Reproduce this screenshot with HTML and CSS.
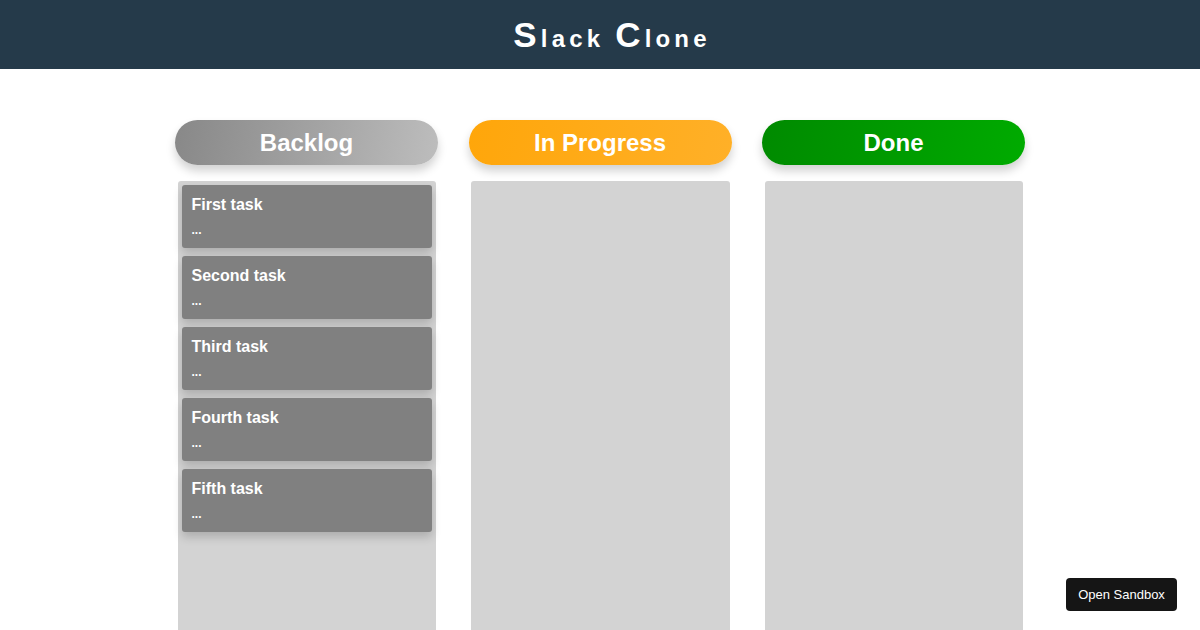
FILE: index.html
```html
<!DOCTYPE html>
<html>
<head>
<meta charset="utf-8">
<link rel="stylesheet" href="styles.css">
</head>
<body>
<header class="topbar">
  <h1 class="title"><span class="big">S</span>lack <span class="big">C</span>lone</h1>
</header>
<main class="board">
  <section class="column">
    <h2 class="col-head backlog">Backlog</h2>
    <div class="col-body">
      <div class="card"><div class="card-title">First task</div><div class="card-desc">...</div></div>
      <div class="card"><div class="card-title">Second task</div><div class="card-desc">...</div></div>
      <div class="card"><div class="card-title">Third task</div><div class="card-desc">...</div></div>
      <div class="card"><div class="card-title">Fourth task</div><div class="card-desc">...</div></div>
      <div class="card"><div class="card-title">Fifth task</div><div class="card-desc">...</div></div>
    </div>
  </section>
  <section class="column">
    <h2 class="col-head progress">In Progress</h2>
    <div class="col-body"></div>
  </section>
  <section class="column">
    <h2 class="col-head done">Done</h2>
    <div class="col-body"></div>
  </section>
</main>
<a class="sandbox-btn">Open Sandbox</a>
</body>
</html>
```
FILE: styles.css
```css
html, body {
  margin: 0;
  padding: 0;
  background: #ffffff;
  font-family: "Liberation Sans", Arial, sans-serif;
  overflow: hidden;
}
.topbar {
  height: 69px;
  background: #253a4a;
  display: flex;
  align-items: center;
  justify-content: center;
}
.title {
  margin: 0;
  color: #ffffff;
  font-size: 24px;
  font-weight: bold;
  letter-spacing: 4.2px;
  line-height: 1;
  padding-left: 24px;
}
.title .big {
  font-size: 35px;
}
.board {
  display: flex;
  justify-content: center;
  gap: 30.5px;
  padding-top: 51px;
}
.column {
  width: 263px;
  display: flex;
  flex-direction: column;
}
.col-head {
  margin: 0;
  height: 45px;
  line-height: 45px;
  border-radius: 23px;
  text-align: center;
  color: #ffffff;
  font-size: 24px;
  font-weight: bold;
  box-shadow: 0 6px 10px rgba(0, 0, 0, 0.18);
}
.backlog {
  background: linear-gradient(100deg, #888888 0%, #a4a4a4 55%, #bdbdbd 100%);
}
.progress {
  background: linear-gradient(100deg, #ffa60a 0%, #ffb028 100%);
}
.done {
  background: linear-gradient(100deg, #008a00 0%, #00ab00 100%);
}
.col-body {
  margin: 16px 2px 0 2.5px;
  height: 470px;
  background: #d3d3d3;
  border-radius: 3px;
  padding: 4px;
  display: flex;
  flex-direction: column;
  gap: 8px;
}
.card {
  background: #808080;
  border-radius: 3px;
  padding: 10px;
  color: #ffffff;
  box-shadow: 0 5px 10px rgba(0, 0, 0, 0.18);
}
.card-title {
  font-size: 16px;
  line-height: 20px;
  font-weight: bold;
}
.card-desc {
  margin-top: 8px;
  font-size: 12px;
  line-height: 15px;
  font-weight: bold;
}
.sandbox-btn {
  position: fixed;
  right: 23px;
  bottom: 19px;
  width: 111px;
  height: 33px;
  line-height: 33px;
  text-align: center;
  background: #151515;
  color: #ffffff;
  font-size: 13px;
  border-radius: 4px;
  font-family: "Liberation Sans", Arial, sans-serif;
}
```
